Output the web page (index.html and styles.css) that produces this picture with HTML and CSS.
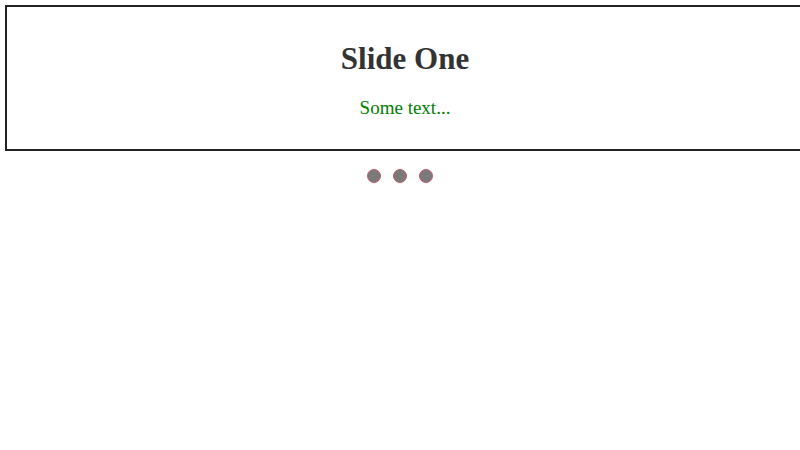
FILE: index.html
```html
<!DOCTYPE html>
<html>
<head>
<meta charset="utf-8">
<link rel="stylesheet" href="styles.css">
</head>
<body>
<div class="slider">
  <div class="slide">
    <h1 class="title">Slide One</h1>
    <p class="text">Some text...</p>
  </div>
</div>
<div class="dots">
  <span class="dot"></span>
  <span class="dot"></span>
  <span class="dot"></span>
</div>
</body>
</html>
```
FILE: styles.css
```css
html, body {
  margin: 0;
  padding: 0;
  background: #fff;
}
body {
  padding: 5px 0 0 5px;
  font-family: "Liberation Serif", "Times New Roman", serif;
  overflow: hidden;
}
.slider {
  width: 800px;
}
.slide {
  border: 2px solid #222;
  padding: 34px 0 29px;
  text-align: center;
}
.title {
  margin: 0;
  font-size: 31px;
  line-height: 36px;
  font-weight: bold;
  color: #333;
}
.text {
  margin: 19px 0 0;
  font-size: 19px;
  line-height: 24px;
  color: #008000;
}
.dots {
  display: flex;
  justify-content: center;
  gap: 12px;
  margin: 18px 0 0 -5px;
  width: 800px;
}
.dot {
  width: 12px;
  height: 12px;
  border-radius: 50%;
  background: #7a7a7a;
  border: 1px solid #c85a6a;
}
```
